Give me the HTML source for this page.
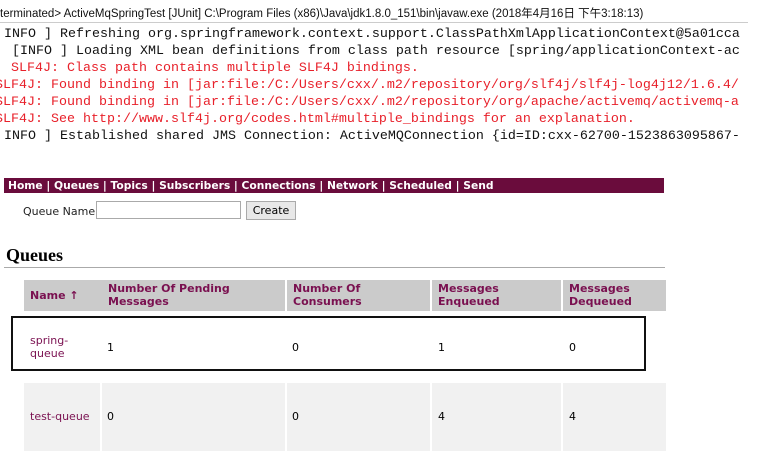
<!DOCTYPE html>
<html><head><meta charset="utf-8"><style>
body{margin:0;width:768px;height:451px;background:#fff;position:relative;overflow:hidden;font-family:"Liberation Sans","Noto Sans CJK SC",sans-serif}
.t{position:absolute;left:0;top:5px;font-size:11.5px;color:#111;white-space:nowrap}
.hl{position:absolute;left:0;top:22px;width:748px;height:1px;background:#ccc}
.con{position:absolute;left:0;top:26px;width:748px;height:125px;overflow:hidden}
.l{position:absolute;font-family:"Liberation Mono",monospace;font-size:13.33px;white-space:pre;line-height:17px;color:#111}
.r{color:#e8202a}
.nav{position:absolute;left:4px;top:178px;width:660px;height:15px;background:#6a0c3c;color:#fff;font-weight:bold;font-size:10.7px;line-height:15px;padding-left:4px;box-sizing:border-box;font-family:"DejaVu Sans",sans-serif;white-space:nowrap}
.v{font-family:"DejaVu Sans",sans-serif;font-size:11px;position:absolute;white-space:nowrap}
.cell{position:absolute;font-family:"DejaVu Sans",sans-serif;font-size:11px}
.h{background:#cbcbcb;color:#7a1050;font-weight:bold;line-height:13px;padding:2px 0 0 6px;box-sizing:border-box;top:280px;height:31px}
.g{background:#f1f1f1;top:383px;height:68px}
</style></head><body>
<div class="t">terminated&gt; ActiveMqSpringTest [JUnit] C:\Program Files (x86)\Java\jdk1.8.0_151\bin\javaw.exe (2018年4月16日 下午3:18:13)</div>
<div class="hl"></div>
<div class="con">
<div class="l" style="left:4px;top:0">INFO ] Refreshing org.springframework.context.support.ClassPathXmlApplicationContext@5a01cca</div>
<div class="l" style="left:12px;top:17px">[INFO ] Loading XML bean definitions from class path resource [spring/applicationContext-ac</div>
<div class="l r" style="left:11px;top:34px">SLF4J: Class path contains multiple SLF4J bindings.</div>
<div class="l r" style="left:-5px;top:51px">SLF4J: Found binding in [jar:file:/C:/Users/cxx/.m2/repository/org/slf4j/slf4j-log4j12/1.6.4/</div>
<div class="l r" style="left:-5px;top:68px">SLF4J: Found binding in [jar:file:/C:/Users/cxx/.m2/repository/org/apache/activemq/activemq-a</div>
<div class="l r" style="left:-5px;top:85px">SLF4J: See http://www.slf4j.org/codes.html#multiple_bindings for an explanation.</div>
<div class="l" style="left:4px;top:102px">INFO ] Established shared JMS Connection: ActiveMQConnection {id=ID:cxx-62700-1523863095867-</div>
</div>
<div class="nav">Home | Queues | Topics | Subscribers | Connections | Network | Scheduled | Send</div>
<div class="v" style="left:23px;top:205px;color:#222">Queue Name</div>
<div style="position:absolute;left:96px;top:201px;width:145px;height:18px;border:1px solid #aaa;box-sizing:border-box"></div>
<div style="position:absolute;left:246px;top:201px;width:50px;height:19px;border:1px solid #aaa;background:#e8e8e8;box-sizing:border-box;font-family:'DejaVu Sans',sans-serif;font-size:11px;text-align:center;line-height:17px">Create</div>
<div style="position:absolute;left:6px;top:245px;font-family:'Liberation Serif',serif;font-weight:bold;font-size:18px">Queues</div>
<div style="position:absolute;left:4px;top:267px;width:661px;height:1px;background:#aaa"></div>
<div class="cell h" style="left:24px;width:81px;padding-top:9px">Name ↑</div>
<div class="cell h" style="left:102px;width:183px">Number Of Pending<br>Messages</div>
<div class="cell h" style="left:287px;width:143px">Number Of<br>Consumers</div>
<div class="cell h" style="left:432px;width:129px">Messages<br>Enqueued</div>
<div class="cell h" style="left:563px;width:103px">Messages<br>Dequeued</div>
<div style="position:absolute;left:11px;top:316px;width:635px;height:55px;border:2px solid #111;box-sizing:border-box"></div>
<div class="cell" style="left:30px;top:334px;color:#7a1050;line-height:13px">spring-<br>queue</div>
<div class="cell" style="left:107px;top:341px">1</div>
<div class="cell" style="left:292px;top:341px">0</div>
<div class="cell" style="left:438px;top:341px">1</div>
<div class="cell" style="left:569px;top:341px">0</div>
<div class="cell g" style="left:24px;width:76px"></div>
<div class="cell g" style="left:102px;width:183px"></div>
<div class="cell g" style="left:287px;width:143px"></div>
<div class="cell g" style="left:432px;width:129px"></div>
<div class="cell g" style="left:563px;width:103px"></div>
<div class="cell" style="left:30px;top:410px;color:#7a1050">test-queue</div>
<div class="cell" style="left:107px;top:410px">0</div>
<div class="cell" style="left:292px;top:410px">0</div>
<div class="cell" style="left:438px;top:410px">4</div>
<div class="cell" style="left:569px;top:410px">4</div>
</body></html>
